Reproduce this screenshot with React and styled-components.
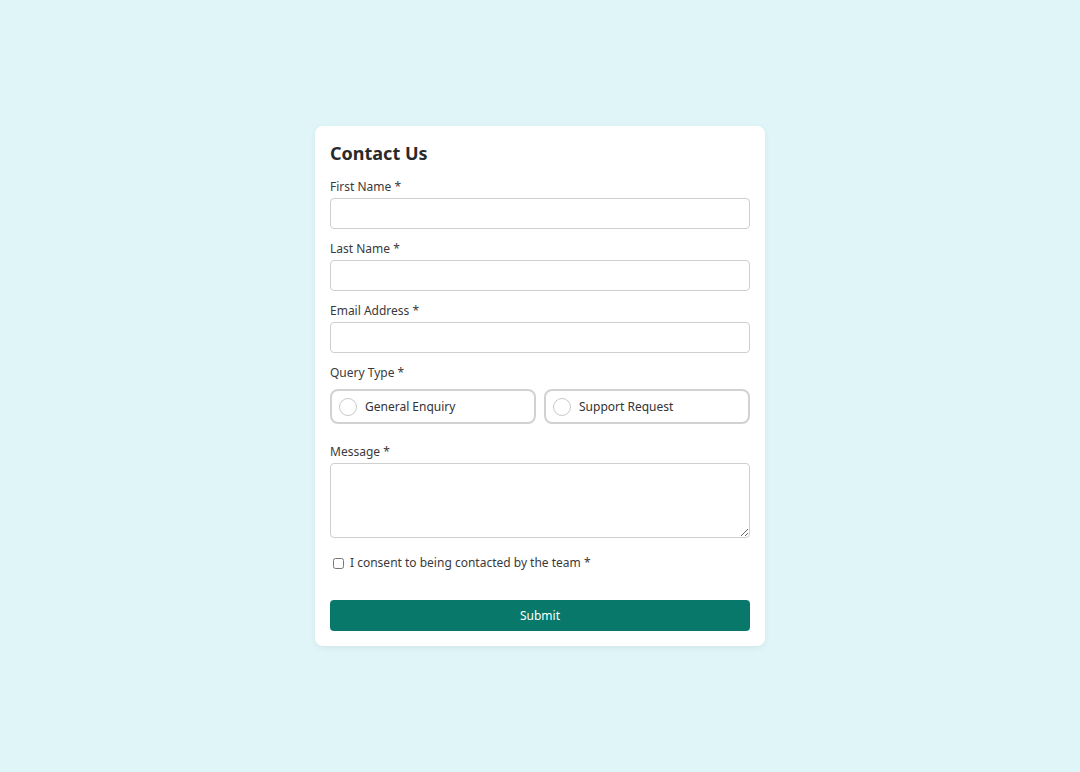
import React, { useState } from "react";
import styled, { createGlobalStyle } from "styled-components";

const GlobalStyle = createGlobalStyle`
  * {
    box-sizing: border-box;
  }
  body {
    margin: 0;
    background-color: #dff5f8;
    font-family: "Noto Sans", "Open Sans", sans-serif;
    color: #333;
  }
`;

const Page = styled.div`
  min-height: 772px;
  display: flex;
  justify-content: center;
  align-items: flex-start;
  padding-top: 126px;
`;

const Card = styled.form`
  width: 450px;
  background-color: #fff;
  border-radius: 8px;
  padding: 15px;
  box-shadow: 0 2px 6px rgba(0, 0, 0, 0.06);
`;

const Title = styled.h1`
  margin: 0 0 12px;
  font-size: 18px;
  line-height: 24px;
  font-weight: 700;
  color: #2a2a2a;
`;

const Field = styled.div`
  display: flex;
  flex-direction: column;
  margin-bottom: ${(p) => p.gap ?? 10}px;
`;

const Label = styled.label`
  font-size: 12px;
  line-height: 19px;
  color: #3a3a3a;
  margin-bottom: ${(p) => p.space || 2}px;
`;

const Input = styled.input`
  width: 100%;
  height: 31px;
  border: 1px solid #cfcfcf;
  border-radius: 4px;
  padding: 0 8px;
  font-family: inherit;
  font-size: 12px;
  outline: none;
`;

const RadioRow = styled.div`
  display: grid;
  grid-template-columns: 1fr 1fr;
  gap: 8px;
`;

const RadioOption = styled.label`
  display: flex;
  align-items: center;
  gap: 8px;
  height: 35px;
  padding: 0 7px;
  border: 2px solid #d2d2d2;
  border-radius: 8px;
  font-size: 12px;
  color: #333;
  cursor: pointer;
`;

const RadioDot = styled.span`
  width: 18px;
  height: 18px;
  border-radius: 50%;
  border: 1.5px solid ${(p) => (p.checked ? "#07786a" : "#c9c9c9")};
  background: ${(p) =>
    p.checked ? "radial-gradient(#07786a 40%, #fff 45%)" : "#fff"};
`;

const HiddenRadio = styled.input`
  display: none;
`;

const TextArea = styled.textarea`
  width: 100%;
  height: 75px;
  display: block;
  border: 1px solid #cfcfcf;
  border-radius: 4px;
  padding: 6px 8px;
  font-family: inherit;
  font-size: 12px;
  outline: none;
`;

const ConsentRow = styled.label`
  display: flex;
  align-items: center;
  gap: 5px;
  margin: 15px 0 28px;
  font-size: 12px;
  line-height: 19px;
  color: #3a3a3a;

  input {
    margin: 3px 1px 1px 3px;
    width: 11px;
    height: 11px;
  }
`;

const SubmitButton = styled.button`
  width: 100%;
  height: 31px;
  border: none;
  border-radius: 4px;
  background-color: #07786a;
  color: #fff;
  font-family: inherit;
  font-size: 12px;
  cursor: pointer;
`;

const queryTypes = ["General Enquiry", "Support Request"];

const App = () => {
  const [query, setQuery] = useState("");

  return (
    <>
      <GlobalStyle />
      <Page>
        <Card onSubmit={(e) => e.preventDefault()}>
          <Title>Contact Us</Title>
          <Field>
            <Label>First Name *</Label>
            <Input type="text" />
          </Field>
          <Field>
            <Label>Last Name *</Label>
            <Input type="text" />
          </Field>
          <Field>
            <Label>Email Address *</Label>
            <Input type="email" />
          </Field>
          <Field gap={18}>
            <Label space={7}>Query Type *</Label>
            <RadioRow>
              {queryTypes.map((el) => (
                <RadioOption key={el}>
                  <HiddenRadio
                    type="radio"
                    name="query"
                    checked={query === el}
                    onChange={() => setQuery(el)}
                  />
                  <RadioDot checked={query === el} />
                  {el}
                </RadioOption>
              ))}
            </RadioRow>
          </Field>
          <Field gap={0}>
            <Label>Message *</Label>
            <TextArea />
          </Field>
          <ConsentRow>
            <input type="checkbox" />
            I consent to being contacted by the team *
          </ConsentRow>
          <SubmitButton type="submit">Submit</SubmitButton>
        </Card>
      </Page>
    </>
  );
};

export default App;
